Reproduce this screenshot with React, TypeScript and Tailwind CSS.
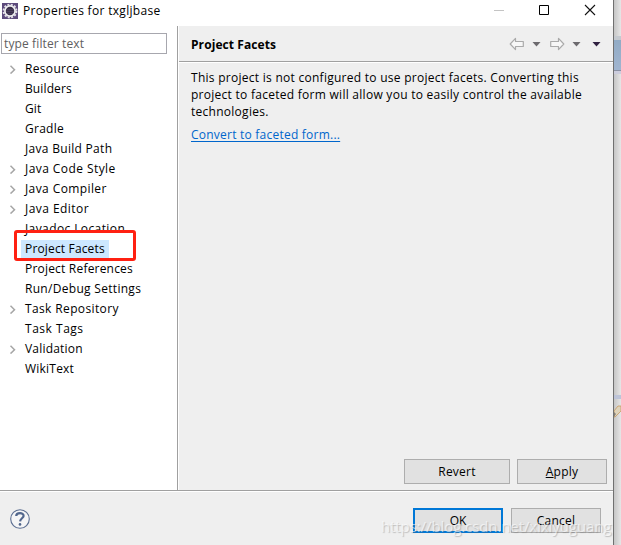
import React from "react";

type Item = { label: string; open?: boolean; spacing: string };

const items: Item[] = [
  { label: "Resource", open: true, spacing: "tracking-[0.33px]" },
  { label: "Builders", spacing: "tracking-[0.12px]" },
  { label: "Git", spacing: "tracking-[0.1px]" },
  { label: "Gradle", spacing: "tracking-[0.25px]" },
  { label: "Java Build Path", spacing: "tracking-[0.3px]" },
  { label: "Java Code Style", open: true, spacing: "tracking-[0.43px]" },
  { label: "Java Compiler", open: true, spacing: "tracking-[0.4px]" },
  { label: "Java Editor", open: true, spacing: "tracking-[0.45px]" },
  { label: "Javadoc Location", spacing: "tracking-[0.4px]" },
  { label: "Project Facets", spacing: "tracking-[0.16px]" },
  { label: "Project References", spacing: "tracking-[0.2px]" },
  { label: "Run/Debug Settings", spacing: "tracking-[0.3px]" },
  { label: "Task Repository", open: true, spacing: "tracking-[0.37px]" },
  { label: "Task Tags", spacing: "tracking-[0.52px]" },
  { label: "Validation", open: true, spacing: "tracking-[0.2px]" },
  { label: "WikiText", spacing: "tracking-[0.22px]" },
];

function EclipseIcon() {
  return (
    <svg width="16" height="16" viewBox="0 0 16 16" className="shrink-0">
      <rect width="16" height="16" fill="#5d4b7c" />
      <circle cx="8" cy="8" r="6.5" fill="none" stroke="#e4e1e8" strokeWidth="1.8" strokeDasharray="2 1.4" />
      <circle cx="8" cy="8" r="5.1" fill="#3a3049" stroke="#efeff0" strokeWidth="1.7" />
      <path d="M4.5 6.5h7M4.2 8.5h7.6M5 10.5h6" stroke="#55496d" strokeWidth=".6" />
    </svg>
  );
}

function Caret({ color }: { color: string }) {
  return (
    <svg width="9" height="5" viewBox="0 0 9 5">
      <path d="M0.5 0h8L4.5 4.5z" fill={color} />
    </svg>
  );
}

function Arrow({ flip }: { flip?: boolean }) {
  return (
    <svg width="16" height="14" viewBox="0 0 16 14" className={flip ? "-scale-x-100" : ""}>
      <path d="M1.2 7L6.5 1.4V4.5H14.3V9.5H6.5V12.6z" fill="#f7f7f7" stroke="#aaa" strokeWidth="1.2" strokeLinejoin="round" />
    </svg>
  );
}

export default function App() {
  return (
    <div className="relative flex h-[545px] w-[621px] overflow-hidden bg-[#efefef] font-['Open_Sans','Noto_Sans',sans-serif] text-[12px] text-black">
      <div className="flex w-[613px] shrink-0 flex-col">
        <header className="flex h-[26px] shrink-0 items-start bg-white pl-[2px]">
          <div className="flex h-[21px] items-center gap-[5px] pt-px">
            <EclipseIcon />
            <span className="whitespace-nowrap tracking-[0.31px]">Properties for txgljbase</span>
          </div>
          <svg width="103" height="12" viewBox="0 0 103 12" className="mt-[4px] mr-[17px] ml-auto shrink-0" fill="none">
            <path d="M1 6.5h10" stroke="#c4c4c4" />
            <path d="M46.5 1.5h9v9h-9z" stroke="#000" />
            <path d="M92 1l10 10M102 1L92 11" stroke="#111" strokeWidth="1.1" />
          </svg>
        </header>

        <div className="flex h-[464px] shrink-0">
          <aside className="w-[177px] shrink-0 bg-white">
            <div className="mt-[7px] ml-px flex h-[21px] w-[166px] items-center border border-[#a7a7ae] pl-[2px] tracking-[0.12px] text-[#606060]">type filter text</div>
            <ul className="mt-[5px]">
              {items.map((item) => (
                <li key={item.label} className="flex h-[20px] items-center pl-[9px]">
                  <span className="flex w-[12px] shrink-0">
                    {item.open && (
                      <svg width="8" height="9" viewBox="0 0 8 9" fill="none">
                        <path d="M1.5 .8L5.5 4.7L1.5 8.6" stroke="#a6a6a6" strokeWidth="1.5" />
                      </svg>
                    )}
                  </span>
                  <span className={`flex h-[19px] items-center px-[4px] whitespace-nowrap ${item.spacing} ${item.label === "Project Facets" ? "w-[88px] bg-[#cce8ff]" : ""}`}>{item.label}</span>
                </li>
              ))}
            </ul>
          </aside>
          <div className="w-[2px] shrink-0 border-r border-l border-r-white border-l-[#a0a0a0]" />
          <main className="flex min-w-0 flex-1 flex-col">
            <div className="flex h-[35px] shrink-0 items-center justify-between pr-[12px] pl-[12px]">
              <h1 className="pt-[3px] text-[12px] font-bold tracking-[0.08px]">Project Facets</h1>
              <div className="flex items-center pt-px">
                <Arrow />
                <span className="ml-[7px]"><Caret color="#6c6a6e" /></span>
                <span className="ml-[8px]"><Arrow flip /></span>
                <span className="ml-[7px]"><Caret color="#6c6a6e" /></span>
                <span className="ml-[11px]"><Caret color="#302040" /></span>
              </div>
            </div>
            <div className="h-[2px] shrink-0 border-t border-b border-t-[#a0a0a0] border-b-white" />
            <div className="pt-[6px] pl-[12px]">
              <p className="leading-[17px] whitespace-nowrap tracking-[0.27px]">
                This project is not configured to use project facets. Converting this<br />
                project to faceted form will allow you to easily control the available<br />
                technologies.
              </p>
              <a className="mt-[6px] block w-[150px] leading-[17px] whitespace-nowrap tracking-[0.23px] text-[#0066cc] underline underline-offset-2">Convert to faceted form...</a>
            </div>
            <div className="mt-auto mr-[6px] mb-[6px] flex justify-end gap-[7px]">
              <button className="h-[25px] w-[106px] border border-[#adadad] bg-[#e1e1e1] tracking-[0.25px]">Revert</button>
              <button className="h-[25px] w-[90px] border border-[#adadad] bg-[#e1e1e1] tracking-[0.25px]"><span className="underline">A</span>pply</button>
            </div>
          </main>
        </div>

        <div className="h-[2px] shrink-0 border-t border-b border-t-[#a0a0a0] border-b-white" />
        <footer className="flex h-[53px] items-start justify-between pt-[16px] pr-[12px] pl-[10px]">
          <svg width="20" height="20" viewBox="0 0 20 20" className="mt-px" fill="none">
            <circle cx="10" cy="10" r="9.3" fill="#f5f5f6" stroke="#5b6e91" strokeWidth="1.1" />
            <path d="M6.2 7C6.3 3.1 13.8 3.2 13.6 6.9C13.5 9.2 10.2 9.4 10.1 12.4" stroke="#52678d" strokeWidth="2.2" />
            <circle cx="10" cy="15.4" r="1.3" fill="#52678d" />
          </svg>
          <div className="flex gap-[8px]">
            <button className="h-[25px] w-[90px] border-2 border-[#0078d7] bg-[#e1e1e1]">OK</button>
            <button className="h-[25px] w-[90px] border border-[#adadad] bg-[#e1e1e1] tracking-[0.25px]">Cancel</button>
          </div>
        </footer>
      </div>

      <div className="w-px shrink-0 bg-[#707070]" />
      <div className="flex flex-1 flex-col bg-linear-to-r from-[#c6c6c6] to-[#e6e6e6]">
        <div className="h-[36px]" />
        <div className="h-[4px] bg-[#c4c9cf]" />
        <div className="h-[30px] bg-linear-to-b from-[#91abc5] to-[#a0b5d0]" />
        <div className="h-px bg-[#8990a4]" />
        <div className="h-[3px] bg-[#cccddd]" />
        <div className="mt-[321px] h-[4px] bg-[#bdc4d8]" />
        <svg width="7" height="14" viewBox="0 0 7 14" className="mt-[6px]">
          <path d="M0 6L4 1H7V6L1 12H0z" fill="#ded3ba" stroke="#c69a61" strokeWidth=".8" />
          <path d="M0 7l2 2-2 3z" fill="#858078" />
        </svg>
      </div>

      <div className="absolute top-[230px] left-[14px] h-[31px] w-[122px] rounded-[3px] border-3 border-[#ff2011]" />
      <div className="pointer-events-none absolute top-[516px] left-[381px] text-[15px] leading-[20px] tracking-[-0.09px] whitespace-nowrap text-white/60 [text-shadow:1px_1px_1px_rgba(100,100,100,0.35)]">https://blog.csdn.net/xixiyuguang</div>
    </div>
  );
}
